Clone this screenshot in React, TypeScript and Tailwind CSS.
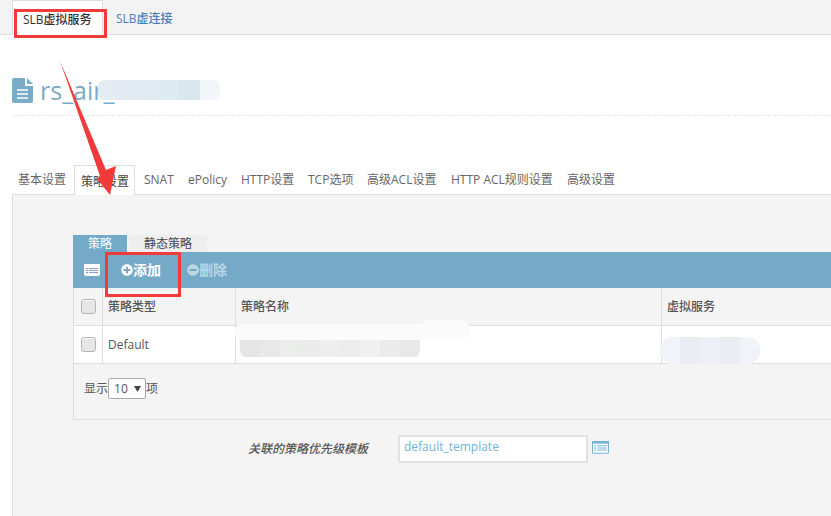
import { FaPlusCircle, FaMinusCircle } from "react-icons/fa";

const font = { fontFamily: '"Open Sans", "Noto Sans CJK SC", sans-serif' };

const settingTabs = [
  { label: "基本设置", box: "w-[62px] pl-[6px]" },
  { label: "策略设置", box: "w-[61px] pl-[6px]", active: true },
  { label: "SNAT", box: "w-[46px] pl-[9px]" },
  { label: "ePolicy", box: "w-[53px] pl-[7px]" },
  { label: "HTTP设置", box: "w-[67px] pl-[7px]" },
  { label: "TCP选项", box: "w-[59px] pl-[7px]" },
  { label: "高级ACL设置", box: "w-[84px] pl-[7px]" },
  { label: "HTTP ACL规则设置", box: "w-[116px] pl-[7px]" },
  { label: "高级设置", box: "w-[62px] pl-[7px]" },
];

const nameMosaic = ["bg-[#e5e5e5]", "bg-[#e8e8e8]", "bg-[#ebedeb]", "bg-[#ebebeb]", "bg-[#eeeeee]", "bg-[#ececea]", "bg-[#f0f0f0]", "bg-[#ebebeb]", "bg-[#e8e8e8]"];
const titleMosaic = ["bg-[#e4ecf2]", "bg-[#e2ebf2]", "bg-[#e1eaf1]", "bg-[#deeaf1]", "bg-[#d9e7ef]", "bg-[#f2f6fa]"];
const serviceMosaic = ["bg-[#f0f3f7]", "bg-[#eaeef3]", "bg-[#edf0f4]", "bg-[#eaeef3]", "bg-[#f0f3f7]"];

const ListIcon = ({ frame, line, size = 16 }: { frame: string; line: string; size?: number }) => (
  <svg width={size} height={size * 0.75} viewBox="0 0 16 12">
    <rect x="0.5" y="0.5" width="15" height="11" rx="1" fill="#fff" stroke={frame} />
    <rect x="0" y="0" width="16" height="2.5" fill={frame} />
    <path d="M2 4.5h2M5 4.5h9M2 6.5h2M5 6.5h9M2 8.5h2M5 8.5h9" stroke={line} strokeWidth="1" />
  </svg>
);

const Checkbox = () => (
  <span className="block w-[15px] h-[15px] rounded-[3px] border border-[#b5b5b5] bg-[#e6e6e6] shadow-[inset_0_1px_1px_#fff]" />
);

const App = () => {
  return (
    <div className="relative w-[831px] h-[516px] overflow-hidden bg-white text-[12px] text-[#555]" style={font}>
      {/* top nav */}
      <div className="flex h-[35px] bg-[#f3f3f3] border-b border-[#ddd] pl-[12px]">
        <div className="w-[91px] h-[35px] bg-white border border-[#ddd] border-b-0 pl-[10px] pt-[9px] leading-[20px] font-medium text-[#333]">
          SLB虚拟服务
        </div>
        <div className="pl-[13px] pt-[9px] leading-[20px] font-medium text-[#4a7fb5]">SLB虚连接</div>
      </div>

      {/* title */}
      <div className="ml-[12px] mt-[43px] h-[38px] flex items-start border-b border-dashed border-[#e8e8e8]">
        <svg width="21" height="25" viewBox="0 0 21 25" className="shrink-0">
          <path d="M2 0H13V8H21V23a2 2 0 0 1-2 2H2a2 2 0 0 1-2-2V2a2 2 0 0 1 2-2Z" fill="#7aabc9" />
          <path d="M15 0L21 6H15Z" fill="#7aabc9" />
          <path d="M5 12H16M5 16H16M5 20H16" stroke="#fff" strokeWidth="1.6" />
        </svg>
        <span className="ml-[7px] text-[25px] leading-[25px] font-normal text-[#7aabc9]">rs_air_</span>
      </div>

      {/* settings tabs */}
      <div className="flex items-end h-[80px] ml-[12px] border-b border-[#ddd] -mt-[1px]">
        {settingTabs.map((t) => (
          <div
            key={t.label}
            className={
              t.active
                ? `${t.box} h-[30px] -mb-px bg-white border border-[#ddd] border-b-0 leading-[30px] pt-[1px] text-[#444] whitespace-nowrap`
                : `${t.box} h-[30px] leading-[30px] pt-[1px] text-[#666] whitespace-nowrap`
            }
          >
            {t.label}
          </div>
        ))}
      </div>

      {/* panel */}
      <div className="ml-[12px] h-[322px] bg-[#f4f4f4] border-l border-[#ddd] pl-[60px] pt-[40px]">
        <div className="flex h-[17px] gap-[2px]">
          <div className="w-[54px] bg-[#73aac8] text-white text-center leading-[17px]">策略</div>
          <div className="w-[78px] bg-[#eeeeee] text-[#445] text-center leading-[17px]">静态策略</div>
        </div>

        <div className="flex items-center h-[36px] bg-[#74a9c7] text-white">
          <span className="ml-[11px] flex">
            <ListIcon frame="#ffffff" line="#8a9fd0" />
          </span>
          <span className="ml-[21px] flex items-center font-bold text-[14px] leading-none">
            <FaPlusCircle className="w-[12px] h-[12px]" />
            添加
          </span>
          <span className="ml-[26px] flex items-center font-bold text-[14px] leading-none text-[#bcd6e4]">
            <FaMinusCircle className="w-[12px] h-[12px]" />
            删除
          </span>
        </div>

        <div className="border-l border-[#ddd]">
          <div className="flex h-[38px] border-b border-[#ddd] font-medium text-[#555]">
            <div className="w-[29px] flex items-center justify-center border-r border-[#ddd]"><Checkbox /></div>
            <div className="w-[133px] flex items-center pl-[5px] border-r border-[#ddd]">策略类型</div>
            <div className="w-[426px] flex items-center pl-[5px] border-r border-[#ddd]">策略名称</div>
            <div className="flex-1 flex items-center pl-[5px]">虚拟服务</div>
          </div>
          <div className="flex h-[38px] border-b border-[#ddd] bg-white">
            <div className="w-[29px] flex items-center justify-center border-r border-[#ddd]"><Checkbox /></div>
            <div className="w-[133px] flex items-center pl-[5px] border-r border-[#ddd] text-[#555]">Default</div>
            <div className="w-[426px] border-r border-[#ddd]" />
            <div className="flex-1" />
          </div>
          <div className="h-[56px] border-b border-[#ddd] flex items-start pt-[14px] pl-[10px] text-[#555]">
            <span className="leading-[21px]">显示</span>
            <div className="w-[38px] h-[21px] bg-white border border-[#aaa] rounded-[2px] flex items-center pl-[5px] gap-[6px]">
              <span>10</span>
              <svg width="7" height="6" viewBox="0 0 7 6"><path d="M0 0H7L3.5 6Z" fill="#444" /></svg>
            </div>
            <span className="leading-[21px]">项</span>
          </div>
        </div>

        <div className="flex items-start mt-[15px]">
          <span className="ml-[175px] w-[150px] pt-[5px] leading-[17px] italic font-medium text-[#555]">关联的策略优先级模板</span>
          <div className="w-[190px] h-[28px] bg-white border-2 border-[#e2e2e2] pl-[4px] leading-[20px] text-[#74b3d6]">default_template</div>
          <span className="ml-[4px] mt-[6px] flex"><ListIcon frame="#74b3d6" line="#74b3d6" size={17} /></span>
        </div>
      </div>

      {/* blur patches from the screenshot's redaction */}
      <div className="absolute left-[98px] top-[80px] w-[122px] h-[20px] flex rounded-[6px] overflow-hidden">
        {titleMosaic.map((c, i) => (
          <div key={i} className={`${c} flex-1`} />
        ))}
      </div>
      <div className="absolute left-[234px] top-[324px] w-[200px] h-[16px] rounded-l-[8px] bg-[#fbfbfb]" />
      <div className="absolute left-[420px] top-[320px] w-[50px] h-[20px] rounded-[10px] bg-[#fbfbfb]" />
      <div className="absolute left-[240px] top-[340px] w-[180px] h-[17px] flex rounded-b-[6px] overflow-hidden">
        {nameMosaic.map((c, i) => (
          <div key={i} className={`${c} flex-1`} />
        ))}
      </div>
      <div className="absolute left-[660px] top-[337px] w-[100px] h-[27px] flex rounded-[12px] overflow-hidden">
        {serviceMosaic.map((c, i) => (
          <div key={i} className={`${c} flex-1`} />
        ))}
      </div>

      {/* red annotations */}
      <div className="absolute left-[14px] top-[9px] w-[93px] h-[29px] border-[3px] border-[#f23a3a]" />
      <div className="absolute left-[105px] top-[252px] w-[76px] h-[45px] border-[3px] border-[#f23a3a]" />
      <svg className="absolute left-0 top-0 pointer-events-none" width="831" height="516" viewBox="0 0 831 516">
        <path d="M60 61L106 170L116 166L110 195L97 179L100 176Z" fill="#f23a3a" />
      </svg>
    </div>
  );
};

export default App;
